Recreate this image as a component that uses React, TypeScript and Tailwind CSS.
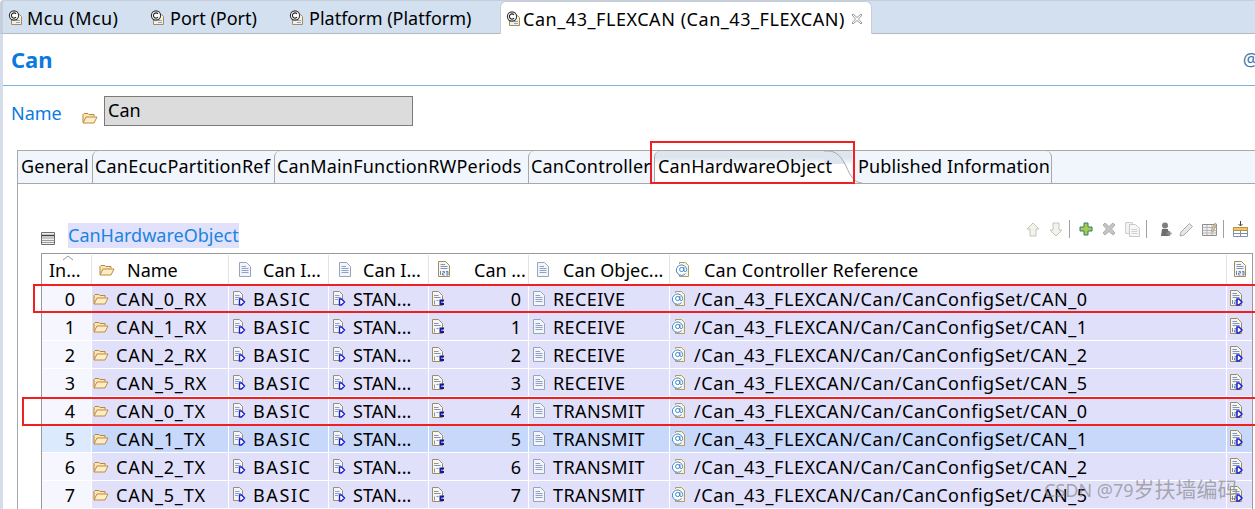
const font = { fontFamily: '"Noto Sans", "Open Sans", sans-serif' };

const FolderIcon = ({ className = "" }: { className?: string }) => (
  <svg width="16" height="12" viewBox="0 0 16 12" className={className}>
    <path d="M1 10.5V2.5L2 1.5H6L7 2.5H12V4.5" fill="#fbe6b4" stroke="#b9853f" strokeWidth="1" />
    <path d="M1 11L4 5H15L12 11Z" fill="#fdeec9" stroke="#c08a3e" strokeWidth="1" />
  </svg>
);

const DocBase = () => (
  <svg width="14" height="15" viewBox="0 0 14 15" className="shrink-0">
    <path d="M1.5 0.5H8.5L12.5 4.5V14.5H1.5Z" fill="#f3f5fa" stroke="#98a4bb" />
    <path d="M3.5 4.5H8M3.5 6.5H10.5M3.5 8.5H10.5M3.5 10.5H10.5" stroke="#8ea2c8" strokeWidth="1" />
  </svg>
);

const DocD = () => (
  <svg width="14" height="15" viewBox="0 0 14 15" className="shrink-0">
    <path d="M1.5 0.5H7.5L10.5 3.5V13.5H1.5Z" fill="#f3f5fa" stroke="#9a8f73" />
    <path d="M3 4.5H7.5M3 6.5H9M3 8.5H6" stroke="#8ea2c8" strokeWidth="1" />
    <path d="M7.5 8V14H9.5L12.5 11L9.5 8Z" fill="#fff" stroke="#1a22cc" strokeWidth="1.4" />
  </svg>
);

const Doc123 = ({ mark = false }: { mark?: boolean }) => (
  <svg width="14" height="17" viewBox="0 0 14 17" className="shrink-0">
    <path d="M1.5 0.5H8.5L12.5 4.5V15.5H1.5Z" fill="#f7f6ef" stroke="#a08c62" />
    <path d="M3.5 3.5H8M3.5 5.5H10.5M3.5 7.5H10.5" stroke="#7d95c4" strokeWidth="1" />
    <path d="M3.5 10V14M5.5 10.5H7.5V12H5.5V14H7.5M9 10.5H11V14H9M9 12H11" stroke="#5c78b0" strokeWidth="0.9" fill="none" />
    {mark && <path d="M8 9V15H10L13 12L10 9Z" fill="#fff" stroke="#1a22cc" strokeWidth="1.5" />}
  </svg>
);

const DocC = () => (
  <svg width="14" height="16" viewBox="0 0 14 16" className="shrink-0">
    <path d="M1.5 0.5H7.5L11.5 4.5V14.5H1.5Z" fill="#f7f6ef" stroke="#a08c62" />
    <path d="M3 4.5H7.5M3 6.5H9.5M3.5 9.5V13.5M5.5 9.5H7.5" stroke="#7d95c4" strokeWidth="1" />
    <path d="M13 9.5H9.5V13H13" fill="none" stroke="#121a9c" strokeWidth="2" />
  </svg>
);

const AtDoc = () => (
  <svg width="15" height="15" viewBox="0 0 15 15" className="shrink-0">
    <path d="M4.5 0.5H10.5L13.5 3.5V14.5H4.5Z" fill="#f6f1dd" stroke="#b39b62" />
    <circle cx="6.5" cy="7.5" r="6" fill="#fff" />
    <path d="M10.5 11.5A5.2 5.2 0 1 1 11.7 7.5V8.2Q11.5 9.6 10.2 9.6Q9 9.6 8.9 8.2V5" fill="none" stroke="#3f86c8" strokeWidth="1" />
    <circle cx="6.7" cy="7.5" r="2.1" fill="none" stroke="#3f86c8" strokeWidth="1" />
  </svg>
);

const EditorIcon = () => (
  <svg width="15" height="15" viewBox="0 0 15 15" className="shrink-0">
    <path d="M3.5 4.5H11.5L13.5 6.5V14.5H3.5Z" fill="#f3f0df" stroke="#a08c62" />
    <path d="M8 10.5H12M8 12.5H12" stroke="#8ea2c8" />
    <circle cx="6" cy="5.5" r="4.6" fill="#fff" stroke="#333" strokeWidth="1.1" />
    <path d="M8 3.8A2.6 2.6 0 1 0 8 7.2" fill="none" stroke="#222" strokeWidth="1.1" />
  </svg>
);

const MainTab = ({ label, width, gap }: { label: string; width: string; gap: string }) => (
  <div className={`flex items-center pl-[5px] pt-[1px] ${gap} ${width}`}>
    <EditorIcon />
    <span>{label}</span>
  </div>
);

const InnerTab = ({ label, width, active }: { label: string; width: string; active?: boolean }) => (
  <div
    className={`flex h-[33px] items-center whitespace-nowrap rounded-tl-[6px] border-l border-[#a8a8a8] pb-[4px] pl-[2px] tracking-[0.2px] ${width} ${
      active ? "bg-white bg-gradient-to-b from-[#dde5ee] from-20% to-white to-45%" : ""
    }`}
  >
    <span className="relative z-10">{label}</span>
  </div>
);

const Sep = () => <div className="mx-[6px] h-[18px] w-px bg-[#a0a0a0]" />;

const Toolbar = () => (
  <div className="flex items-center pt-[1px]">
    <svg width="14" height="15" viewBox="0 0 14 15" className="mr-[9px]">
      <path d="M7 1L13 7H10V14H4V7H1Z" fill="#f3f3ec" stroke="#c4c4ba" />
    </svg>
    <svg width="14" height="15" viewBox="0 0 14 15">
      <path d="M7 14L13 8H10V1H4V8H1Z" fill="#f3f3ec" stroke="#c4c4ba" />
    </svg>
    <Sep />
    <svg width="14" height="14" viewBox="0 0 14 14" className="ml-[3px] mr-[9px]">
      <path d="M5 1H9V5H13V9H9V13H5V9H1V5H5Z" fill="#a7cb52" stroke="#2f7f66" />
    </svg>
    <svg width="14" height="14" viewBox="0 0 14 14" className="mr-[9px]">
      <path d="M3 1L7 4.5L11 1L13 3L9.5 7L13 11L11 13L7 9.5L3 13L1 11L4.5 7L1 3Z" fill="#c4c4c4" stroke="#b0b0b0" />
    </svg>
    <svg width="15" height="16" viewBox="0 0 15 16">
      <path d="M0.5 1.5H7.5V12.5H0.5Z" fill="#f2f2f0" stroke="#cfcfcf" />
      <path d="M4.5 3.5H10.5L14.5 7.5V15.5H4.5Z" fill="#f7f7f5" stroke="#c8c8c8" />
      <path d="M6.5 8.5H12.5M6.5 10.5H12.5M6.5 12.5H12.5" stroke="#d0d0d0" />
    </svg>
    <Sep />
    <svg width="14" height="15" viewBox="0 0 14 15" className="ml-[6px] mr-[6px]">
      <circle cx="6" cy="3.5" r="3" fill="#7f7f7f" />
      <path d="M2 14L3 7H9L10 14Z" fill="#6e6e6e" />
      <path d="M10 9V14M7.5 11.5H12.5" stroke="#8b8b8b" strokeWidth="2" />
    </svg>
    <svg width="15" height="15" viewBox="0 0 15 15" className="mr-[8px]">
      <path d="M1 14L2 10L10.5 1.5L13.5 4.5L5 13Z" fill="#e8e8e8" stroke="#a8a8a8" />
    </svg>
    <svg width="15" height="15" viewBox="0 0 15 15">
      <path d="M0.5 2.5H14.5V13.5H0.5Z" fill="#f1f1f1" stroke="#8d8d8d" />
      <path d="M0.5 5.5H14.5M0.5 8.5H14.5M0.5 11H14.5M5 3V13M10 3V13" stroke="#b5b5b5" />
      <path d="M9 9L13 1L14.5 2L11 10Z" fill="#d9c9a8" stroke="#a89878" strokeWidth="0.7" />
    </svg>
    <Sep />
    <svg width="15" height="16" viewBox="0 0 15 16" className="ml-[3px]">
      <path d="M0.5 6.5H14.5V15.5H0.5Z" fill="#fff" stroke="#7d8fb0" />
      <path d="M0.5 6.5H14.5V9.5H0.5Z" fill="#f1c75b" stroke="#b9924a" />
      <path d="M0.5 12.5H14.5M7.5 9.5V15.5" stroke="#7d8fb0" />
      <path d="M7.5 0V4.5M5.5 3L7.5 5L9.5 3" fill="none" stroke="#444" />
    </svg>
  </div>
);

const gridCols = "grid-cols-[50px_137px_100px_100px_100px_141px_557px_26px]";

const HeaderCell = ({ icon, label, className = "" }: { icon?: React.ReactNode; label: string; className?: string }) => (
  <div className={`flex items-center overflow-hidden whitespace-nowrap border-r border-[#e3e3e3] ${className}`}>
    {icon}
    <span>{label}</span>
  </div>
);

const rows = [
  { i: 0, name: "CAN_0_RX", type: "RECEIVE", ch: 0 },
  { i: 1, name: "CAN_1_RX", type: "RECEIVE", ch: 1 },
  { i: 2, name: "CAN_2_RX", type: "RECEIVE", ch: 2 },
  { i: 3, name: "CAN_5_RX", type: "RECEIVE", ch: 5 },
  { i: 4, name: "CAN_0_TX", type: "TRANSMIT", ch: 0 },
  { i: 5, name: "CAN_1_TX", type: "TRANSMIT", ch: 1 },
  { i: 6, name: "CAN_2_TX", type: "TRANSMIT", ch: 2 },
  { i: 7, name: "CAN_5_TX", type: "TRANSMIT", ch: 5 },
];

const Row = ({ row }: { row: (typeof rows)[number] }) => {
  const selected = row.i === 5;
  const bg = selected ? "bg-[#c8d8fb]" : "bg-[#e0e0fb]";
  const cell = `flex h-[27px] items-center overflow-hidden whitespace-nowrap border-r border-white ${bg}`;
  return (
    <div className={`grid ${gridCols} border-b border-white`}>
      <div className={`flex h-[27px] items-center justify-end border-r border-white pr-[16px] ${selected ? "bg-[#dceafd]" : "bg-[#f5f6fe]"}`}>
        {row.i}
      </div>
      <div className={`${cell} gap-[7px] pl-[1px]`}>
        <FolderIcon className="shrink-0" />
        <span className="tracking-[0.8px]">{row.name}</span>
      </div>
      <div className={`${cell} gap-[7px] pl-[3px]`}>
        <DocD />
        <span className="tracking-[1.6px]">BASIC</span>
      </div>
      <div className={`${cell} gap-[7px] pl-[3px]`}>
        <DocD />
        <span>STAN...</span>
      </div>
      <div className={`${cell} justify-between pl-[2px] pr-[7px]`}>
        <DocC />
        <span>{row.i}</span>
      </div>
      <div className={`${cell} gap-[7px] pl-[3px]`}>
        <DocBase />
        <span className="tracking-[0.4px]">{row.type}</span>
      </div>
      <div className={`${cell} gap-[8px] pl-[1px]`}>
        <AtDoc />
        <span className="tracking-[0.53px]">/Can_43_FLEXCAN/Can/CanConfigSet/CAN_{row.ch}</span>
      </div>
      <div className={`${cell} pl-[2px]`}>
        <Doc123 mark />
      </div>
    </div>
  );
};

const App = () => {
  return (
    <div className="relative h-[509px] w-[1255px] overflow-hidden bg-white text-[18px] leading-[24px] text-black" style={font}>
      {/* editor tabs */}
      <div className="flex h-[34px] rounded-tl-[4px] border-b border-l-[3px] border-t border-[#c6cedb] border-b-[#b4b9c2] bg-[#d2e0f0]">
        <MainTab label="Mcu (Mcu)" width="w-[142px] tracking-[0.4px]" gap="gap-[4px]" />
        <MainTab label="Port (Port)" width="w-[139px]" gap="gap-[5px]" />
        <MainTab label="Platform (Platform)" width="w-[216px]" gap="gap-[5px]" />
        <div className="-mb-px flex h-[33px] w-[372px] items-center gap-[2px] rounded-t-[6px] border-x border-t border-[#c6cedb] bg-white pl-[5px] pt-[1px]">
          <EditorIcon />
          <span className="whitespace-nowrap tracking-[0.55px]">Can_43_FLEXCAN (Can_43_FLEXCAN)</span>
          <svg width="12" height="12" viewBox="0 0 12 12" className="ml-[4px]">
            <path d="M2 1L6 4.5L10 1L11 2L7.5 6L11 10L10 11L6 7.5L2 11L1 10L4.5 6L1 2Z" fill="#fff" stroke="#9a9a9a" />
          </svg>
        </div>
      </div>

      <div className="h-[475px] border-l-[3px] border-[#d5dcea]">
        {/* form heading */}
        <div className="flex h-[52px] items-center justify-between border-b border-[#7fb0df] pb-[2px] pl-[8px]">
          <span className="text-[22px] font-bold text-[#0a7ae0]">Can</span>
          <span className="mr-[-4px] text-[18px] text-[#3f78b0]">@</span>
        </div>

        {/* name field */}
        <div className="flex h-[64px] items-start pt-[10px]">
          <span className="ml-[8px] mt-[5px] w-[71px] text-[#0a7ae0]">Name</span>
          <FolderIcon className="mt-[16px]" />
          <div className="ml-[6px] h-[30px] w-[309px] border border-[#7a7a7a] bg-[#dcdcdc] pl-[3px] leading-[27px]">Can</div>
        </div>

        {/* inner tab folder */}
        <div className="ml-[14px] h-[359px] border-l border-[#a8a8a8]">
          <div className="flex h-[34px] items-start border-y border-[#a8a8a8] bg-[#f1f6fd]">
            <InnerTab label="General" width="w-[74px] !border-l-0 !pl-[3px]" />
            <InnerTab label="CanEcucPartitionRef" width="w-[182px]" />
            <InnerTab label="CanMainFunctionRWPeriods" width="w-[254px]" />
            <InnerTab label="CanController" width="w-[126px]" />
            <div className="relative -mb-px w-[198px]">
              <InnerTab label="CanHardwareObject" width="w-[198px] !pl-[3px]" active />
              {/* s-curve at the right of the selected tab */}
              <svg width="38" height="36" viewBox="0 0 38 36" className="absolute left-[170px] top-[-1px]">
                <path d="M0 1H4C13 1 18 8 22 16C26 25 30 33 38 33V33H0Z" fill="#ffffff" />
                <path d="M0 1H4C13 1 18 8 22 14H0Z" fill="#dde5ee" />
                <path d="M0 1H4C13 1 18 8 22 16C26 25 30 33 38 33" fill="none" stroke="#a8a8a8" />
              </svg>
            </div>
            <div className="flex h-[33px] w-[200px] items-center whitespace-nowrap rounded-tr-[6px] border-r border-[#a8a8a8] pb-[4px] pl-[6px] tracking-[0.1px]">
              <span className="relative z-10">Published Information</span>
            </div>
          </div>

          <div className="pl-[23px] pr-[2px]">
            {/* section title */}
            <div className="flex h-[69px] items-start justify-between">
              <div className="flex items-center gap-[13px] pt-[39px]">
                <svg width="14" height="13" viewBox="0 0 14 13" className="mt-[5px]">
                  <path d="M0.5 0.5H13.5V12.5H0.5Z" fill="#f0f0f0" stroke="#6f6f6f" />
                  <path d="M0.5 3.5H13.5" stroke="#444" strokeWidth="1.5" />
                  <path d="M1 6H13M1 8.5H13M1 10.5H13" stroke="#9a9a9a" />
                </svg>
                <span className="h-[25px] bg-[#e1e1fb] leading-[25px] text-[#1a85e0]">CanHardwareObject</span>
              </div>
              <div className="pr-[5px] pt-[35px]">
                <Toolbar />
              </div>
            </div>

            {/* table */}
            <div className="h-[262px] w-[1212px] overflow-hidden border-x border-t border-[#9a9a9a]">
              <div className={`grid ${gridCols} h-[30px] bg-white pt-[1px]`}>
                <HeaderCell label="In..." className="pl-[7px]" />
                <HeaderCell icon={<FolderIcon className="mr-[12px]" />} label="Name" className="pl-[7px]" />
                <HeaderCell icon={<DocBase />} label="Can I..." className="pl-[9px] [&>svg]:mr-[11px]" />
                <HeaderCell icon={<DocBase />} label="Can I..." className="pl-[9px] [&>svg]:mr-[11px]" />
                <HeaderCell icon={<Doc123 />} label="Can ..." className="pl-[8px] [&>svg]:mr-[23px]" />
                <HeaderCell icon={<DocBase />} label="Can Objec..." className="pl-[7px] [&>svg]:mr-[13px]" />
                <HeaderCell icon={<AtDoc />} label="Can Controller Reference" className="pl-[5px] tracking-[0.12px] [&>svg]:mr-[14px]" />
                <HeaderCell icon={<Doc123 />} label="" className="border-r-0 pl-[6px]" />
              </div>
              <div className="border-t border-white">
                {rows.map((row) => (
                  <Row key={row.i} row={row} />
                ))}
              </div>
            </div>
          </div>
        </div>
      </div>

      {/* sort arrow on first column */}
      <svg width="12" height="6" viewBox="0 0 12 6" className="absolute left-[62px] top-[255px]">
        <path d="M1 5L6 1L11 5" fill="none" stroke="#9a9a9a" />
      </svg>

      {/* red annotation boxes */}
      <div className="absolute left-[33px] top-[284px] h-[29px] w-[1222px] border-2 border-r-0 border-[#f02020]" />
      <div className="absolute left-[22px] top-[397px] h-[29px] w-[1233px] border-2 border-r-0 border-[#f02020]" />
      <div className="absolute left-[650px] top-[141px] h-[43px] w-[205px] border-2 border-[#f02020]" />

      {/* watermark */}
      <div
        className="absolute left-[1044px] top-[477px] whitespace-nowrap text-[18px] leading-[24px] text-[#8a8a8a]/70"
        style={{ fontFamily: '"Noto Sans", "Noto Sans CJK SC", sans-serif' }}
      >
        CSDN @79<span className="text-[21px]">岁扶墙编码</span>
      </div>
    </div>
  );
};

export default App;
